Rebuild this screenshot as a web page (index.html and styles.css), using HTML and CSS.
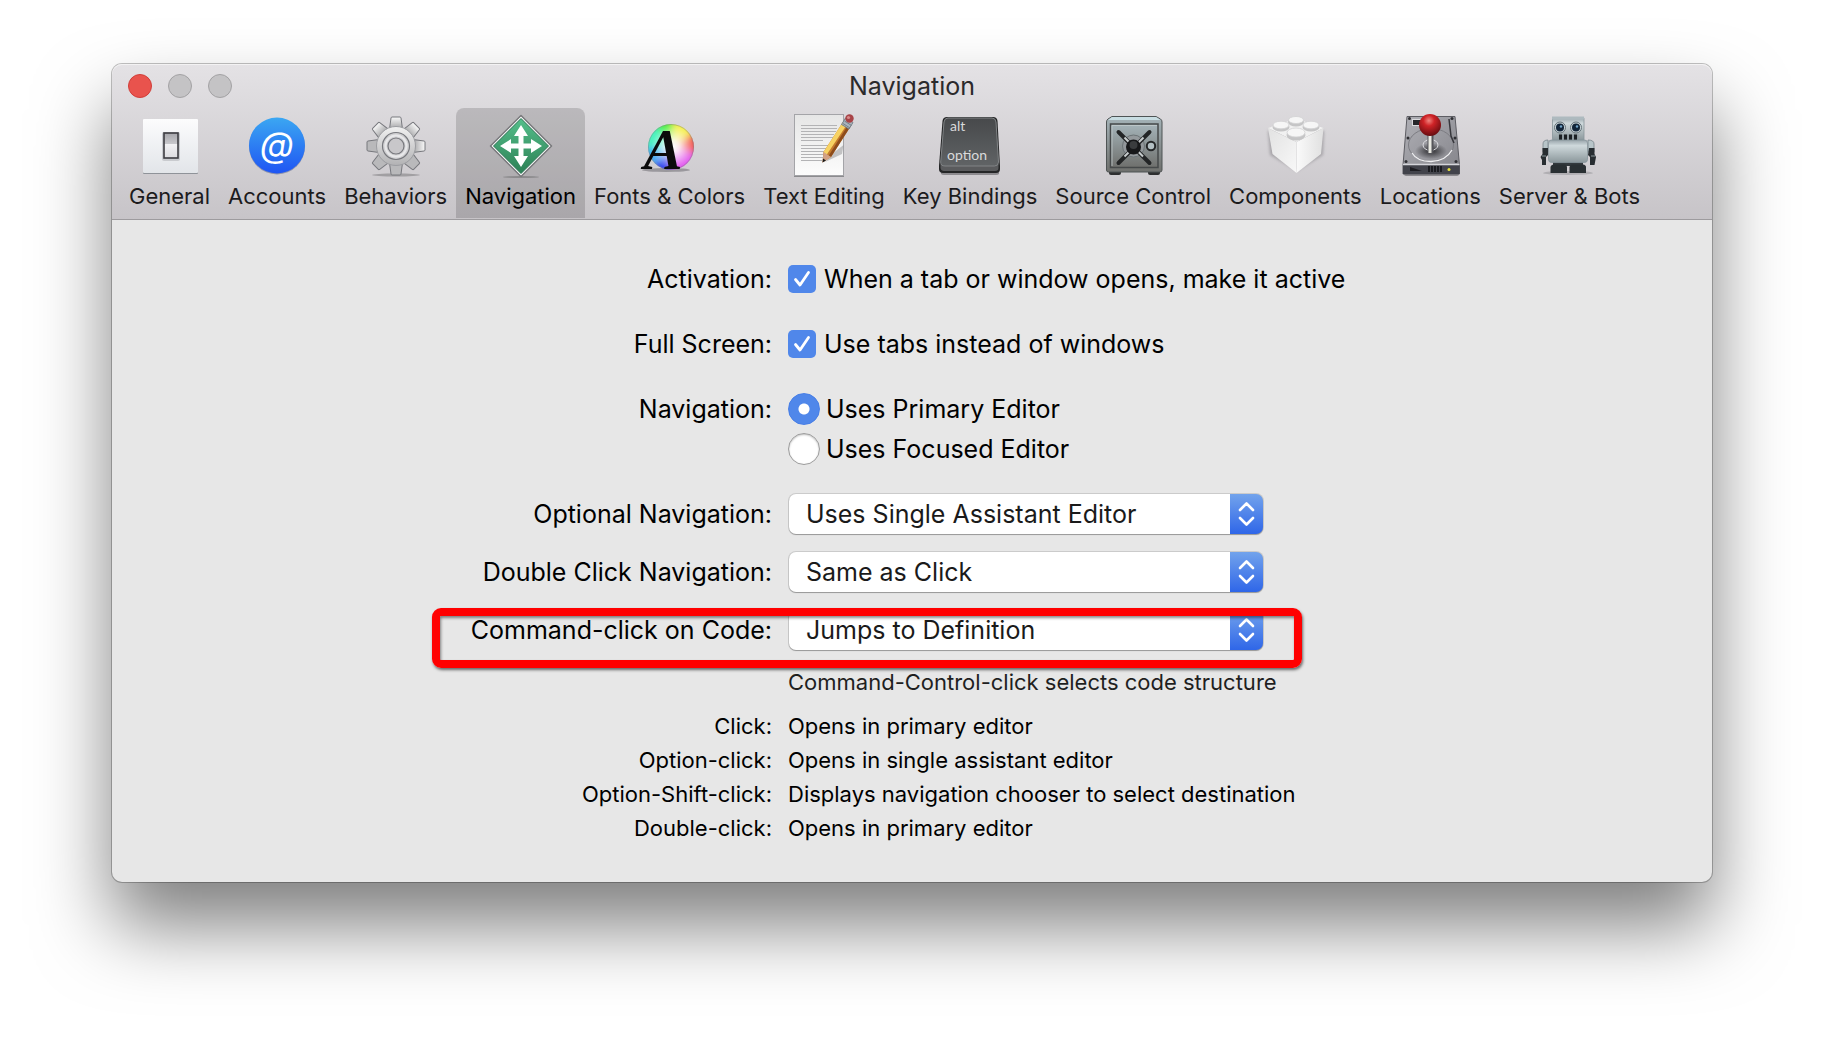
FILE: index.html
```html
<!DOCTYPE html>
<html lang="en">
<head>
  <meta charset="UTF-8" />
  <meta name="viewport" content="width=device-width, initial-scale=1.0" />
  <title>Navigation</title>
  <link rel="stylesheet" href="styles.css">
</head>
<body>
  <main class="window">
    <header>
      <div class="titlebar">
        <div class="lights">
          <button class="light close" aria-label="Close"></button>
          <button class="light" aria-label="Minimize"></button>
          <button class="light" aria-label="Zoom"></button>
        </div>
        <h1>Navigation</h1>
      </div>

      <nav class="toolbar">
        <button class="tool">
          <svg viewBox="0 0 64 64">
            <defs>
              <linearGradient id="plate" x1="0" y1="0" x2="0" y2="1"><stop offset="0" stop-color="#fcfcfd"/><stop offset="1" stop-color="#e2e5e9"/></linearGradient>
              <linearGradient id="switch" x1="0" y1="0" x2="0" y2="1"><stop offset="0" stop-color="#a5a5aa"/><stop offset=".45" stop-color="#c9c9cd"/><stop offset=".46" stop-color="#f1f1f3"/><stop offset="1" stop-color="#dcdce0"/></linearGradient>
            </defs>
            <rect x="5" y="6" width="55" height="54" rx="1" fill="#8f9399"/>
            <rect x="5" y="5" width="55" height="54" rx="1" fill="url(#plate)"/>
            <rect x="24" y="18" width="18" height="29" rx="2" fill="#c9cbcf"/>
            <rect x="26" y="19" width="14" height="25" fill="url(#switch)" stroke="#3d3d42" stroke-width="1.6"/>
          </svg>
          <span>General</span>
        </button>
        <button class="tool">
          <svg viewBox="0 0 64 64">
            <defs>
              <linearGradient id="blue" x1="0" y1="0" x2="0" y2="1"><stop offset="0" stop-color="#3ba7f2"/><stop offset="1" stop-color="#1f55f3"/></linearGradient>
            </defs>
            <circle cx="32" cy="32.5" r="28" fill="#8d94ad"/>
            <circle cx="32" cy="31.5" r="28" fill="url(#blue)"/>
            <text x="32" y="43" class="at">@</text>
          </svg>
          <span>Accounts</span>
        </button>
        <button class="tool">
          <svg viewBox="0 0 64 64">
            <defs>
              <linearGradient id="steel" x1="0" y1="0" x2="0" y2="1"><stop offset="0" stop-color="#fafafa"/><stop offset="1" stop-color="#a3a3a5"/></linearGradient>
              <linearGradient id="steel2" x1="0" y1="0" x2="0" y2="1"><stop offset="0" stop-color="#f1f1f1"/><stop offset="1" stop-color="#b2b2b4"/></linearGradient>
              <path id="tooth" d="M25.5 15 L27 4 Q27.200 3 28 3 H36 Q36.800 3 37 4 L38.5 15 Z"/>
            </defs>
            <ellipse cx="32" cy="61" rx="24" ry="1.5" fill="#8d8b8f" opacity=".7"/>
            <g fill="url(#steel)" stroke="#77787d" stroke-width="1">
              <use href="#tooth"/>
              <use href="#tooth" transform="rotate(45 32 32)"/>
              <use href="#tooth" transform="rotate(90 32 32)"/>
              <use href="#tooth" transform="rotate(-45 32 32)"/>
            </g>
            <g fill="#b9b9bb" stroke="#77787d" stroke-width="1">
              <use href="#tooth" transform="rotate(135 32 32)"/>
              <use href="#tooth" transform="rotate(180 32 32)"/>
              <use href="#tooth" transform="rotate(225 32 32)"/>
              <use href="#tooth" transform="rotate(270 32 32)"/>
            </g>
            <circle cx="32" cy="32" r="19.5" fill="url(#steel2)" stroke="#9c9da1" stroke-width="1"/>
            <circle cx="32" cy="32" r="13.5" fill="#cfcfd1" stroke="#77787d" stroke-width="1.2"/>
            <circle cx="32" cy="32" r="10.5" fill="none" stroke="#e8e8ea" stroke-width="2"/>
            <circle cx="32" cy="32" r="8" fill="#c8c7ca" stroke="#77787d" stroke-width="1.2"/>
          </svg>
          <span>Behaviors</span>
        </button>
        <button class="tool active">
          <svg viewBox="0 0 64 64">
            <defs>
              <linearGradient id="green" x1="0" y1="0" x2="0" y2="1"><stop offset="0" stop-color="#55bf8b"/><stop offset="1" stop-color="#2c8055"/></linearGradient>
            </defs>
            <ellipse cx="32" cy="63" rx="18" ry="1" fill="#8b8a8c"/>
            <path d="M32 1.5 L62.5 32 L32 62.5 L1.5 32 Z" fill="#fff" stroke="#77777a" stroke-width="1.5" stroke-linejoin="round"/>
            <path d="M32 4.5 L59.5 32 L32 59.5 L4.5 32 Z" fill="url(#green)" stroke="#277150" stroke-width="1"/>
            <path d="M32 11 L39 22 H34.5 V29.5 H42 V25 L53 32 L42 39 V34.5 H34.5 V42 H39 L32 53 L25 42 H29.5 V34.5 H22 V39 L11 32 L22 25 V29.5 H29.5 V22 H25 Z" fill="#fff"/>
          </svg>
          <span>Navigation</span>
        </button>
        <button class="tool">
          <svg viewBox="0 0 64 64">
            <defs>
              <clipPath id="wheel"><circle cx="33" cy="33" r="23"/></clipPath>
              <filter id="soft" x="-20%" y="-20%" width="140%" height="140%"><feGaussianBlur stdDeviation="3.5"/></filter>
              <radialGradient id="glow"><stop offset="0" stop-color="#fff"/><stop offset=".3" stop-color="#fff" stop-opacity=".8"/><stop offset="1" stop-color="#fff" stop-opacity="0"/></radialGradient>
            </defs>
            <ellipse cx="28" cy="56" rx="24" ry="2" fill="#77757a" opacity=".6"/>
            <g clip-path="url(#wheel)">
              <g filter="url(#soft)">
                <path d="M33 33 L10 0 H36 Z" fill="#59f04e"/>
                <path d="M33 33 L36 0 H64 V14 Z" fill="#f5f04b"/>
                <path d="M33 33 L64 14 V42 Z" fill="#f2504a"/>
                <path d="M33 33 L64 42 V64 H34 Z" fill="#e152ee"/>
                <path d="M33 33 L34 64 H4 Z" fill="#3a4df0"/>
                <path d="M33 33 L0 64 V34 Z" fill="#42b0f7"/>
                <path d="M33 33 L0 34 V0 H10 Z" fill="#4ef3c0"/>
              </g>
              <circle cx="35" cy="33" r="22" fill="url(#glow)"/>
            </g>
            <circle cx="33" cy="33" r="22.5" fill="none" stroke="#7d7d80" stroke-opacity=".45"/>
            <text x="25" y="55" class="letter">A</text>
          </svg>
          <span>Fonts &amp; Colors</span>
        </button>
        <button class="tool">
          <svg viewBox="0 0 64 64">
            <defs>
              <linearGradient id="paper" x1="0" y1="0" x2="0" y2="1"><stop offset="0" stop-color="#e6e6e6"/><stop offset="1" stop-color="#fcfcfc"/></linearGradient>
            </defs>
            <rect x="2" y="2" width="50" height="61" fill="#8b8b8e"/>
            <rect x="2.5" y=".5" width="49" height="61" fill="url(#paper)" stroke="#a4a4a8"/>
            <path d="M9 11.5H45M9 14.500H45M9 17.5H44M9 20.5H42M9 23.5H41M9 26.5H31M9 31.5H36M9 34.5H34M9 37.5H38M9 40.5H33M9 43.5H32M9 46.5H30" stroke="#b3b3b5" stroke-width="1.2"/>
            <path d="M33 48 L50 40 L51.5 31 L40 40 Z" fill="#77777a" opacity=".4"/>
            <path d="M30.5 48.5 L31.5 38 L51 8 L58.5 12.5 L39 43 Z" fill="#c47a2c"/>
            <path d="M31.5 38 L51 8 L55 10.5 L34.5 41 Z" fill="#f7d263"/>
            <path d="M36.5 42 L56 11 L58.5 12.5 L39 43 Z" fill="#8d4c1c"/>
            <path d="M30.5 48.5 L31.5 38 L39 43 Z" fill="#d3a184"/>
            <path d="M30.5 48.5 L31 44.5 L34 46.5 Z" fill="#1b1b1b"/>
            <path d="M49.5 10.5 L53.5 4 L61 8.5 L57 15 Z" fill="#a9b4bd" stroke="#68737c" stroke-width=".8"/>
            <path d="M51 9.5 L58 14 M52.5 7 L59.5 11.5" stroke="#68737c" stroke-width=".8"/>
            <circle cx="57.5" cy="4.5" r="4.2" fill="#a84347"/>
            <circle cx="56.5" cy="3.5" r="1.6" fill="#d88a8a"/>
          </svg>
          <span>Text Editing</span>
        </button>
        <button class="tool">
          <svg viewBox="0 0 64 64">
            <defs>
              <linearGradient id="key" x1="0" y1="0" x2="0" y2="1"><stop offset="0" stop-color="#47494b"/><stop offset="1" stop-color="#606365"/></linearGradient>
            </defs>
            <path d="M3 57 H61 V60 Q60 61 58 61 H6 Q4 61 3 60 Z" fill="#8d8b8f"/>
            <path d="M9 3 H55 Q59 3 59.5 7 L62 52 V55 Q62 59 58 59 H5 Q1 59 1 55 V52 L4.5 7 Q5 3 9 3 Z" fill="#252627"/>
            <path d="M2.5 50 V54 Q3 57 6 57 H57 Q60.5 57 60.5 54 V50 Z" fill="#5a5b5d"/>
            <path d="M10 4 H54 Q57.5 4 58 8 L60.5 48 Q60.5 52 56.5 52 H7 Q2.5 52 2.7 48 L6 8 Q6.5 4 10 4 Z" fill="url(#key)" stroke="#818486" stroke-width="1"/>
            <text x="12" y="17" class="cap">alt</text>
            <text x="9" y="46" class="cap">option</text>
          </svg>
          <span>Key Bindings</span>
        </button>
        <button class="tool">
          <svg viewBox="0 0 64 64">
            <defs>
              <linearGradient id="safe" x1="0" y1="0" x2="0" y2="1"><stop offset="0" stop-color="#a5b4b9"/><stop offset="1" stop-color="#6f706d"/></linearGradient>
            </defs>
            <rect x="8" y="56" width="12" height="5" rx="2" fill="#2e2f30"/>
            <rect x="47" y="56" width="12" height="5" rx="2" fill="#2e2f30"/>
            <path d="M5.5 8 Q5.5 6 7 5 L11 2.5 H55 L59.5 5 Q61 6 61 8 V56 Q61 58 59 58 H7.5 Q5.5 58 5.5 56 Z" fill="url(#safe)" stroke="#4f5455" stroke-width="1"/>
            <path d="M7 6 L11 3 H55 L59.5 6 Z" fill="#c8dde2"/>
            <rect x="9.5" y="10" width="47.5" height="43.5" fill="url(#safe)" stroke="#46494a" stroke-width="1.5"/>
            <path d="M11 52 V11.5 H56" fill="none" stroke="#c3cccd" stroke-width=".8"/>
            <circle cx="32.5" cy="32" r="11" fill="#93989b" stroke="#6b7376" stroke-width="1"/>
            <path d="M17.5 18 L48.5 49 M48.5 18 L17.5 49" stroke="#232526" stroke-width="4" stroke-linecap="round"/>
            <path d="M23.5 23.5 L42 42.5 M42.5 23.5 L23.5 42.5" stroke="#c7cccd" stroke-width="2"/>
            <circle cx="32.5" cy="33" r="7.5" fill="#17181a"/>
            <circle cx="32.5" cy="31" r="4" fill="#3a3c3e"/>
            <circle cx="50" cy="32" r="4.2" fill="#b4c0c4" stroke="#252728" stroke-width="2"/>
          </svg>
          <span>Source Control</span>
        </button>
        <button class="tool">
          <svg viewBox="0 0 64 64">
            <defs>
              <linearGradient id="brickl" x1="0" y1="0" x2="1" y2="1"><stop offset="0" stop-color="#e2e2e2"/><stop offset="1" stop-color="#f8f8f8"/></linearGradient>
              <linearGradient id="brickr" x1="0" y1="0" x2="1" y2="0"><stop offset="0" stop-color="#fafafa"/><stop offset="1" stop-color="#e0e0e0"/></linearGradient>
              <filter id="brickshade" x="-20%" y="-20%" width="140%" height="140%"><feGaussianBlur stdDeviation="1.5"/></filter>
            </defs>
            <path d="M5 17 L33 6 L61 17 L60 41 L34 57 L7 41 Z" fill="#9b999d" opacity=".8" filter="url(#brickshade)"/>
            <path d="M5 14 L33 4.5 L60.5 14 L33.5 28 Z" fill="#f1f1f1"/>
            <path d="M5 14 L33.5 28 V59 L9.5 40 Z" fill="url(#brickl)"/>
            <path d="M33.5 28 L60.5 14 L58 40 L33.5 59 Z" fill="url(#brickr)"/>
            <g fill="#c5c5c6">
              <ellipse cx="33" cy="8" rx="8" ry="4.5"/>
              <ellipse cx="18" cy="13" rx="8.5" ry="4.5"/>
              <ellipse cx="48" cy="13" rx="8.5" ry="4.5"/>
              <ellipse cx="33" cy="21" rx="9.5" ry="5.5"/>
            </g>
            <g fill="#f6f6f6" stroke="#d2d2d3" stroke-width=".8">
              <ellipse cx="33" cy="6" rx="7.5" ry="3.5"/>
              <ellipse cx="18" cy="11" rx="8" ry="3.8"/>
              <ellipse cx="48" cy="11" rx="8" ry="3.8"/>
              <ellipse cx="33" cy="18.5" rx="9" ry="4.5"/>
            </g>
          </svg>
          <span>Components</span>
        </button>
        <button class="tool">
          <svg viewBox="0 0 64 64">
            <defs>
              <linearGradient id="disk" x1="0" y1="0" x2="1" y2="1"><stop offset="0" stop-color="#b0b0b6"/><stop offset="1" stop-color="#838389"/></linearGradient>
              <radialGradient id="ball" cx=".45" cy=".3" r=".7"><stop offset="0" stop-color="#f0857f"/><stop offset=".35" stop-color="#cf2327"/><stop offset="1" stop-color="#670c10"/></radialGradient>
              <radialGradient id="well"><stop offset="0" stop-color="#2c2c30"/><stop offset="1" stop-color="#2c2c30" stop-opacity="0"/></radialGradient>
            </defs>
            <rect x="6" y="58" width="55" height="4" rx="2" fill="#8b898d"/>
            <path d="M9 2.5 H57 L61.5 51 V60 H5 V51 Z" fill="url(#disk)" stroke="#5d5d63" stroke-width="1"/>
            <path d="M5 51 H61.5 V60 H5 Z" fill="#42434b"/>
            <path d="M5 50.5 H61.5" stroke="#d5d5da" stroke-width="1.5"/>
            <path d="M12 53 L24 57 H12 Z" fill="#1d1d22"/>
            <path d="M31 52V58M34 52V58M37 52V58M40 52V58M43 52V58" stroke="#17181c" stroke-width="1.8"/>
            <circle cx="51" cy="55.5" r="1.5" fill="#e6e13b"/>
            <rect x="14.5" y="5.5" width="9" height="6" fill="#26262a" stroke="#dadadd" stroke-width="1"/>
            <ellipse cx="33" cy="31" rx="22.5" ry="16.5" fill="none" stroke="#7c7c82" stroke-width="1"/>
            <path d="M14 39 Q19 47.5 33 47.5 Q48 47 54 36" fill="none" stroke="#f0f0f2" stroke-width="1.3"/>
            <path d="M51 5 L53 22 L56 29" fill="none" stroke="#37373c" stroke-width="1.5"/>
            <ellipse cx="33" cy="37" rx="16" ry="8" fill="url(#well)"/>
            <ellipse cx="32.5" cy="31" rx="7.5" ry="5.5" fill="none" stroke="#dcdce0" stroke-width="1"/>
            <g fill="#2f2f33">
              <circle cx="11.5" cy="4.5" r="1.5"/><circle cx="54" cy="4.5" r="1.5"/>
              <circle cx="10" cy="24" r="1.5"/><circle cx="57" cy="24" r="1.5"/>
              <circle cx="8" cy="47.5" r="1.5"/><circle cx="58" cy="47.5" r="1.5"/>
            </g>
            <rect x="29.5" y="20" width="6" height="20" rx="1" fill="#55555a"/>
            <rect x="30.5" y="20" width="3" height="19" fill="#e9e9e2"/>
            <circle cx="32" cy="11" r="11" fill="url(#ball)"/>
          </svg>
          <span>Locations</span>
        </button>
        <button class="tool">
          <svg viewBox="0 0 64 64">
            <defs>
              <linearGradient id="tin" x1="0" y1="0" x2="0" y2="1"><stop offset="0" stop-color="#98a4aa"/><stop offset=".25" stop-color="#cfd9dc"/><stop offset="1" stop-color="#8b979b"/></linearGradient>
            </defs>
            <ellipse cx="31" cy="59" rx="25" ry="2" fill="#a3a1a5" opacity=".7"/>
            <path d="M6 30 Q6 26 11 26 V38 H6 Z M57 30 Q57 26 51 26 V38 H57 Z" fill="#b8c5c9" stroke="#77848a" stroke-width=".8"/>
            <path d="M5.5 34 H11 V41 L9 43 V51 H5 V46 L3.5 43 L5.5 40 Z M52 34 H57.5 L57.5 40 L59 43 L57.5 51 H53 V43 L51 41 Z" fill="#272d31"/>
            <path d="M5 42 H9 M54 42 H58" stroke="#8b989c" stroke-width="1"/>
            <rect x="15.5" y="3.5" width="31.5" height="23" rx="1" fill="url(#tin)" stroke="#88959a" stroke-width=".8"/>
            <rect x="15" y="2.5" width="32" height="3" fill="#aebabf"/>
            <rect x="21.5" y="20.5" width="20" height="6" fill="#8d999e"/>
            <path d="M23.5 20.5V26M28.5 20.5V26M33.5 20.5V26M38.5 20.5V26" stroke="#1c2124" stroke-width="3"/>
            <g fill="#c9d3d6" stroke="#66747b" stroke-width="1">
              <circle cx="23" cy="13.5" r="5.5"/><circle cx="39" cy="13.5" r="5.5"/>
            </g>
            <g fill="#122539">
              <circle cx="23" cy="13.5" r="4"/><circle cx="39" cy="13.5" r="4"/>
            </g>
            <g fill="#71a3c8">
              <circle cx="24" cy="12.5" r="1.2"/><circle cx="40" cy="12.5" r="1.2"/>
            </g>
            <path d="M16 47 H46 V52 H16 Z" fill="#33393d"/>
            <rect x="11.5" y="26" width="39" height="22.5" rx="3" fill="url(#tin)" stroke="#87949a" stroke-width=".8"/>
            <path d="M13.5 59 V53 Q14 50.5 17 50.5 H28 Q30 51 30 53 V59 Z M32.5 59 V53 Q33 50.5 35 50.5 H46 Q49 51 49 53 V59 Z" fill="#2a3033"/>
          </svg>
          <span>Server &amp; Bots</span>
        </button>
      </nav>
    </header>

    <form class="settings">
      <div class="row">
        <span class="label">Activation:</span>
        <label class="choice"><input type="checkbox" checked /> When a tab or window opens, make it active</label>
      </div>
      <div class="row spaced">
        <span class="label">Full Screen:</span>
        <label class="choice"><input type="checkbox" checked /> Use tabs instead of windows</label>
      </div>
      <div class="row spaced">
        <span class="label">Navigation:</span>
        <label class="choice"><input type="radio" name="editor" checked /> Uses Primary Editor</label>
      </div>
      <div class="row">
        <span class="label"></span>
        <label class="choice"><input type="radio" name="editor" /> Uses Focused Editor</label>
      </div>
      <div class="row spaced">
        <label class="label" for="optional">Optional Navigation:</label>
        <select id="optional"><option>Uses Single Assistant Editor</option></select>
      </div>
      <div class="row popup">
        <label class="label" for="double">Double Click Navigation:</label>
        <select id="double"><option>Same as Click</option></select>
      </div>
      <div class="row popup">
        <label class="label" for="command">Command-click on Code:</label>
        <div class="marked">
          <select id="command"><option>Jumps to Definition</option></select>
          <div class="highlight"></div>
        </div>
      </div>

      <div class="info">
        <div class="row hint"><span></span><span>Command-Control-click selects code structure</span></div>
        <div class="row"><span class="label">Click:</span><span>Opens in primary editor</span></div>
        <div class="row"><span class="label">Option-click:</span><span>Opens in single assistant editor</span></div>
        <div class="row"><span class="label">Option-Shift-click:</span><span>Displays navigation chooser to select destination</span></div>
        <div class="row"><span class="label">Double-click:</span><span>Opens in primary editor</span></div>
      </div>
    </form>
  </main>
</body>
</html>
```
FILE: styles.css
```css
* {
  box-sizing: border-box;
}

body {
  margin: 0;
  padding: 64px 112px 160px;
  background-color: white;
  font-family: Inter, "Liberation Sans", sans-serif;
  font-size: 25px;
  color: #000;
}

.window {
  background-color: #e7e7e7;
  border-radius: 10px;
  box-shadow: 0 0 0 1px rgba(0, 0, 0, 0.24), 0 44px 76px rgba(0, 0, 0, 0.5);
}

header {
  background: linear-gradient(#e4e2e5, #c7c4c8);
  border-bottom: 1px solid #9d9b9e;
  border-radius: 10px 10px 0 0;
  box-shadow: inset 0 1px 0 #f3f2f3;
  padding-bottom: 1px;
}

.titlebar {
  display: grid;
  grid-template-columns: 1fr auto 1fr;
  align-items: center;
  height: 44px;
  padding: 0 16px;
}

.lights {
  display: flex;
  gap: 16px;
}

.light {
  width: 24px;
  height: 24px;
  padding: 0;
  border: 1px solid #a3a2a4;
  border-radius: 50%;
  background-color: #c4c3c5;
}

.light.close {
  border-color: #d13e39;
  background-color: #e9534d;
}

h1 {
  margin: 0;
  font-size: 25px;
  font-weight: normal;
  color: #2b2a2c;
}

.toolbar {
  display: flex;
  padding: 0 8px;
}

.tool {
  display: flex;
  flex-direction: column;
  align-items: center;
  gap: 4px;
  padding: 6px 9px 8px;
  border: none;
  border-radius: 8px 8px 0 0;
  background: none;
  font-family: inherit;
  font-size: 22px;
  line-height: 28px;
  color: #1c1b1d;
  white-space: nowrap;
}

.tool.active {
  background-color: rgba(0, 0, 0, 0.15);
  color: #000;
}

.tool svg {
  width: 64px;
  height: 64px;
  overflow: visible;
}

.at {
  font: italic 35px Inter, sans-serif;
  fill: white;
  text-anchor: middle;
}

.letter {
  font: italic bold 58px "Liberation Serif", serif;
  fill: #0b0b0b;
  text-anchor: middle;
}

.cap {
  font: 14px Lato, sans-serif;
  fill: #d9dadb;
}

.settings {
  padding: 39px 0 37px;
}

.row {
  display: grid;
  grid-template-columns: 5fr 7fr;
  column-gap: 16px;
  align-items: center;
  min-height: 40px;
}

.row.spaced {
  margin-top: 25px;
}

.row.popup {
  margin-top: 18px;
}

.label {
  text-align: right;
}

.choice {
  display: flex;
  align-items: center;
  gap: 8px;
}

input {
  appearance: none;
  margin: 0;
  background: white center no-repeat;
}

input[type="checkbox"] {
  width: 28px;
  height: 28px;
  border-radius: 5px;
}

input[type="checkbox"]:checked {
  background-color: #5087ea;
  background-image: url("data:image/svg+xml,%3Csvg xmlns='http://www.w3.org/2000/svg' width='28' height='28'%3E%3Cpath d='M7.5 14.5L12 20L20.5 7.5' fill='none' stroke='white' stroke-width='2.8' stroke-linecap='round' stroke-linejoin='round'/%3E%3C/svg%3E");
}

input[type="radio"] {
  width: 32px;
  height: 32px;
  margin-right: -2px;
  border: 1px solid #9b9b9b;
  border-radius: 50%;
  box-shadow: inset 0 1px 2px rgba(0, 0, 0, 0.25);
}

input[type="radio"]:checked {
  border-color: #477ee6;
  background: radial-gradient(circle, white 5px, #5087ea 6px);
  box-shadow: none;
}

select {
  appearance: none;
  width: 474px;
  max-width: 100%;
  height: 40px;
  margin-left: 1px;
  padding: 0 48px 0 17px;
  border: none;
  border-radius: 7px;
  background:
    url("data:image/svg+xml,%3Csvg xmlns='http://www.w3.org/2000/svg' width='33' height='40'%3E%3Cpath d='M10 16L16.5 9.5L23 16M10 24L16.5 30.5L23 24' fill='none' stroke='white' stroke-width='2.6' stroke-linecap='round' stroke-linejoin='round'/%3E%3C/svg%3E") right / 33px 40px no-repeat,
    linear-gradient(#72a3ec, #2f66e8) right / 33px 40px no-repeat,
    white;
  box-shadow: 0 0 0 1px rgba(0, 0, 0, 0.12), 0 1px 1px rgba(0, 0, 0, 0.25);
  font-family: inherit;
  font-size: 25px;
  color: #1a1a1a;
}

/* red frame drawn over the whole command-click row */
.marked {
  position: relative;
}

.marked select {
  display: block;
}

.highlight {
  position: absolute;
  top: -2px;
  left: -356px;
  width: 870px;
  height: 60px;
  border: 8px solid #ff0000;
  border-radius: 9px;
  box-shadow: 1px 2px 3px rgba(0, 0, 0, 0.55), inset 1px 2px 3px rgba(0, 0, 0, 0.45);
  pointer-events: none;
}

.info {
  margin-top: 15px;
  font-size: 22px;
}

.info .row {
  min-height: 34px;
}

.info .hint {
  margin-bottom: 10px;
  color: #1f1f1f;
}
```
